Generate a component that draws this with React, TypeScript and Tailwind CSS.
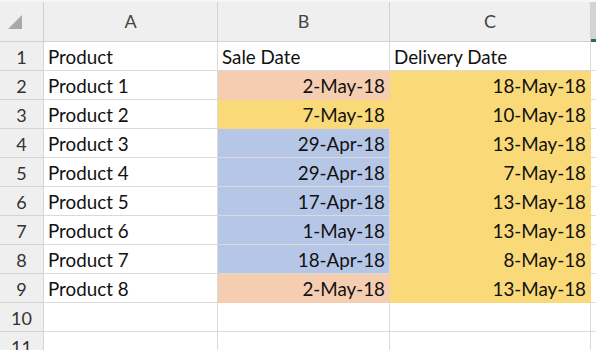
const PEACH = "bg-[#f5cdb0] border-[#f5cdb0]";
const YELLOW = "bg-[#fad978] border-[#fad978]";
const BLUE = "bg-[#b6c6e6] border-[#b6c6e6]";

interface Row {
  product: string;
  sale: string;
  saleFill: string;
  delivery: string;
}

const rows: Row[] = [
  { product: "Product 1", sale: "2-May-18", saleFill: PEACH, delivery: "18-May-18" },
  { product: "Product 2", sale: "7-May-18", saleFill: YELLOW, delivery: "10-May-18" },
  { product: "Product 3", sale: "29-Apr-18", saleFill: BLUE, delivery: "13-May-18" },
  { product: "Product 4", sale: "29-Apr-18", saleFill: BLUE, delivery: "7-May-18" },
  { product: "Product 5", sale: "17-Apr-18", saleFill: BLUE, delivery: "13-May-18" },
  { product: "Product 6", sale: "1-May-18", saleFill: BLUE, delivery: "13-May-18" },
  { product: "Product 7", sale: "18-Apr-18", saleFill: BLUE, delivery: "8-May-18" },
  { product: "Product 8", sale: "2-May-18", saleFill: PEACH, delivery: "13-May-18" },
];

const cell = "h-[29px] border-r border-b border-[#dadada] flex items-end text-[18.8px] leading-[26px] text-[#111]";
const rowHead =
  "w-[44px] shrink-0 h-[29px] border-r border-b border-[#d4d4d4] bg-[#efefef] flex items-end justify-center text-[18px] leading-[26px] text-[#333]";

function SheetRow({ n, a, b, bFill, c, cFill }: { n: number; a?: string; b?: string; bFill?: string; c?: string; cFill?: string }) {
  return (
    <div className="flex">
      <div className={rowHead}>{n}</div>
      <div className={`${cell} w-[174px] shrink-0 bg-white pl-[4px]`}>{a}</div>
      <div className={`${cell} w-[172px] shrink-0 ${bFill ?? "bg-white"} ${bFill ? "justify-end pr-[4px]" : "pl-[4px]"}`}>{b}</div>
      <div className={`${cell} w-[201px] shrink-0 ${cFill ?? "bg-white"} ${cFill ? "justify-end pr-[4px]" : "pl-[4px]"}`}>{c}</div>
      <div className="h-[29px] flex-1 border-b border-[#dadada] bg-white" />
    </div>
  );
}

export default function App() {
  return (
    <div className="w-[596px] h-[350px] overflow-hidden bg-white font-['Lato','Liberation_Sans',sans-serif]">
      <div className="flex h-[42px] border-t-2 border-[#f7f7f7]">
        <div className="w-[44px] shrink-0 bg-[#efefef] border-r border-b border-[#cfcfcf] flex items-start pt-[13px] pl-[8px]">
          <svg width="14" height="14" viewBox="0 0 14 14">
            <polygon points="14,0 14,14 0,14" fill="#a9a9a9" />
          </svg>
        </div>
        {[
          ["A", "w-[174px]"],
          ["B", "w-[172px]"],
          ["C", "w-[201px]"],
        ].map(([l, w]) => (
          <div
            key={l}
            className={`${w} shrink-0 bg-[#efefef] border-r border-b border-[#d2d2d2] flex items-center justify-center text-[18px] text-[#444]`}
          >
            {l}
          </div>
        ))}
        <div className="flex-1 flex flex-col bg-[#d4d4d4]">
          <div className="flex-1" />
          <div className="h-[3px] bg-[#217346]" />
        </div>
      </div>
      <SheetRow n={1} a="Product" b="Sale Date" c="Delivery Date" />
      {rows.map((r, i) => (
        <SheetRow key={r.product} n={i + 2} a={r.product} b={r.sale} bFill={r.saleFill} c={r.delivery} cFill={YELLOW} />
      ))}
      <SheetRow n={10} />
      <SheetRow n={11} />
    </div>
  );
}
